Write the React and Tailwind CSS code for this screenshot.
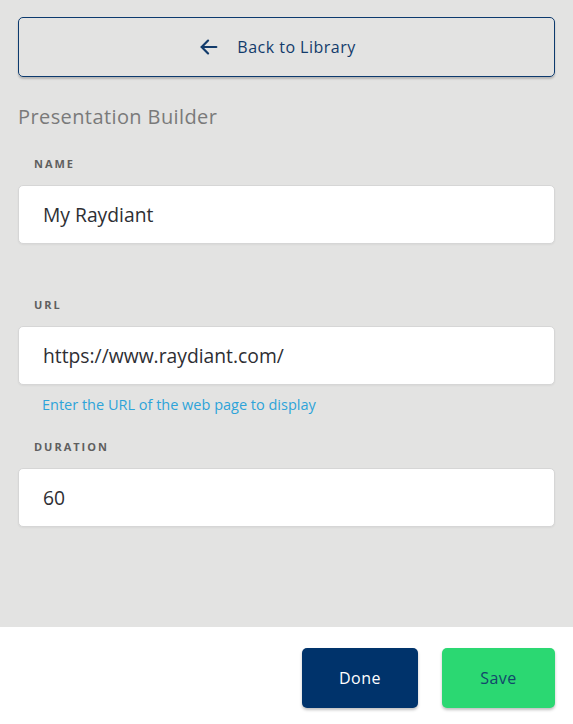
import React, { useState } from 'react'

const font = { fontFamily: '"Open Sans", "Liberation Sans", sans-serif' }

const Field = ({ label, value, onChange, hint }) => (
  <div>
    <label className="block text-[11px] font-bold tracking-[0.18em] uppercase text-[#5f5f5f] ml-4 mb-[14px] leading-[14px]">
      {label}
    </label>
    <input
      className="block w-full h-[59px] bg-white border border-[#d6d6d6] rounded-[5px] px-6 text-[19.3px] text-[#2e2e33] shadow-[0_1px_2px_rgba(0,0,0,0.05)] focus:outline-none"
      value={value}
      onChange={(e) => onChange(e.target.value)}
    />
    {hint && (
      <div className="text-[14.5px] text-[#2ea3d9] ml-6 mt-[10px] leading-[20px]">
        {hint}
      </div>
    )}
  </div>
)

const App = () => {
  const [name, setName] = useState('My Raydiant')
  const [url, setUrl] = useState('https://www.raydiant.com/')
  const [duration, setDuration] = useState('60')

  return (
    <div className="w-[573px] h-[724px] flex flex-col bg-[#e3e3e2]" style={font}>
      <div className="flex-1 px-[18px] pt-[17px]">
        <button className="w-full h-[60px] flex items-center justify-center gap-[17px] pr-[19px] border border-[#0c3a6e] rounded-[5px] shadow-[0_2px_2px_rgba(0,0,0,0.2)] text-[#123b6b] text-[16px] tracking-[0.03em]">
          <svg width="22" height="22" viewBox="0 0 24 24" fill="none" stroke="currentColor" strokeWidth="2.4" strokeLinecap="round" strokeLinejoin="round">
            <path d="M20 12H4" />
            <path d="M11 5l-7 7 7 7" />
          </svg>
          <span>Back to Library</span>
        </button>

        <div className="text-[20px] text-[#7a7a7a] mt-[27px] leading-[26px] tracking-[0.02em]">
          Presentation Builder
        </div>

        <div className="mt-[27px]">
          <Field label="Name" value={name} onChange={setName} />
        </div>
        <div className="mt-[54px]">
          <Field
            label="URL"
            value={url}
            onChange={setUrl}
            hint="Enter the URL of the web page to display"
          />
        </div>
        <div className="mt-[25px]">
          <Field label="Duration" value={duration} onChange={setDuration} />
        </div>
      </div>

      <div className="h-[97px] bg-white flex items-start justify-end gap-6 pr-[18px] pt-[21px]">
        <button className="w-[116px] h-[60px] rounded-[5px] bg-[#00336b] text-white text-[16px] tracking-[0.03em] shadow-[0_2px_3px_rgba(0,0,0,0.25)]">
          Done
        </button>
        <button className="w-[113px] h-[60px] rounded-[5px] bg-[#2bd872] text-[#12476b] text-[16px] tracking-[0.03em] shadow-[0_2px_3px_rgba(0,0,0,0.25)]">
          Save
        </button>
      </div>
    </div>
  )
}

export default App
